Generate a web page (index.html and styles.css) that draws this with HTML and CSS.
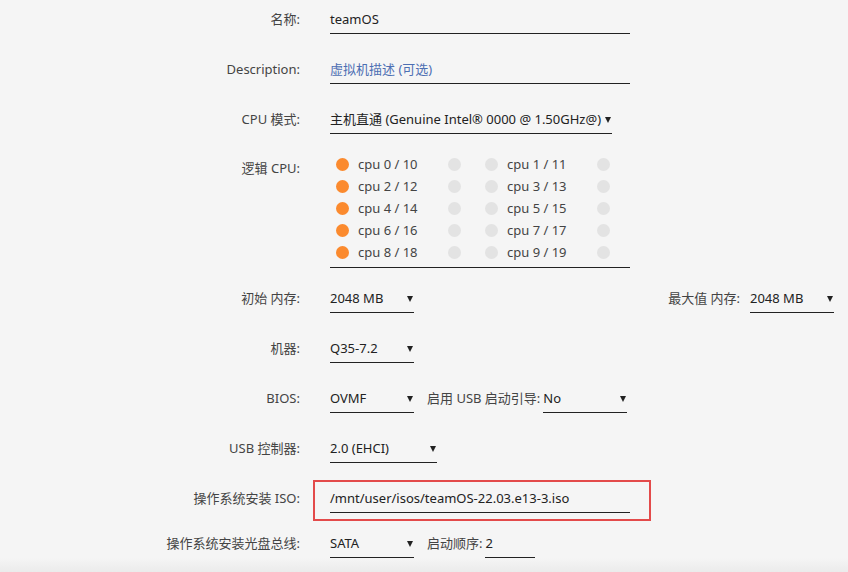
FILE: index.html
```html
<!DOCTYPE html>
<html lang="zh-CN">

<head>
    <meta charset="UTF-8">
    <meta name="viewport" content="width=device-width, initial-scale=1.0">
    <title>虚拟机设置</title>
    <link rel="stylesheet" href="styles.css">
</head>

<body>
<!-- 虚拟机表单 -->
<div class="vm-form">
    <div class="row">
        <div class="label">名称:</div>
        <div class="field w300">teamOS</div>
    </div>
    <div class="row">
        <div class="label">Description:</div>
        <div class="field w300 placeholder">虚拟机描述 (可选)</div>
    </div>
    <div class="row">
        <div class="label">CPU 模式:</div>
        <div class="field select w282">主机直通 (Genuine Intel® 0000 @ 1.50GHz@)<i class="caret"></i></div>
    </div>

    <!-- 逻辑 CPU -->
    <div class="row cpu-row">
        <div class="label cpu-label">逻辑 CPU:</div>
        <div class="cpu-grid">
            <div class="cpu on"><span class="dot"></span>cpu 0 / 10</div><div class="cpu"><span class="dot"></span></div>
            <div class="cpu"><span class="dot"></span>cpu 1 / 11</div><div class="cpu"><span class="dot"></span></div>
            <div class="cpu on"><span class="dot"></span>cpu 2 / 12</div><div class="cpu"><span class="dot"></span></div>
            <div class="cpu"><span class="dot"></span>cpu 3 / 13</div><div class="cpu"><span class="dot"></span></div>
            <div class="cpu on"><span class="dot"></span>cpu 4 / 14</div><div class="cpu"><span class="dot"></span></div>
            <div class="cpu"><span class="dot"></span>cpu 5 / 15</div><div class="cpu"><span class="dot"></span></div>
            <div class="cpu on"><span class="dot"></span>cpu 6 / 16</div><div class="cpu"><span class="dot"></span></div>
            <div class="cpu"><span class="dot"></span>cpu 7 / 17</div><div class="cpu"><span class="dot"></span></div>
            <div class="cpu on"><span class="dot"></span>cpu 8 / 18</div><div class="cpu"><span class="dot"></span></div>
            <div class="cpu"><span class="dot"></span>cpu 9 / 19</div><div class="cpu"><span class="dot"></span></div>
        </div>
    </div>

    <div class="row mem-row">
        <div class="label">初始 内存:</div>
        <div class="field select w84">2048 MB<i class="caret"></i></div>
        <div class="max-mem">
            <span class="inline-label">最大值 内存:</span>
            <div class="field select w84">2048 MB<i class="caret"></i></div>
        </div>
    </div>
    <div class="row">
        <div class="label">机器:</div>
        <div class="field select w84">Q35-7.2<i class="caret"></i></div>
    </div>
    <div class="row">
        <div class="label">BIOS:</div>
        <div class="field select w84">OVMF<i class="caret"></i></div>
        <span class="inline-label">启用 USB 启动引导:</span>
        <div class="field select w84">No<i class="caret"></i></div>
    </div>
    <div class="row">
        <div class="label">USB 控制器:</div>
        <div class="field select w107">2.0 (EHCI)<i class="caret"></i></div>
    </div>
    <div class="row iso-row">
        <div class="label">操作系统安装 ISO:</div>
        <div class="highlight">
            <div class="field w300">/mnt/user/isos/teamOS-22.03.e13-3.iso</div>
        </div>
    </div>
    <div class="row">
        <div class="label">操作系统安装光盘总线:</div>
        <div class="field select w84">SATA<i class="caret"></i></div>
        <span class="inline-label">启动顺序:</span>
        <div class="field w50">2</div>
    </div>
</div>
</body>

</html>
```

FILE: styles.css
```css
html {
    background: linear-gradient(to bottom, #f5f5f5 0, #f5f5f5 558px, #ebebeb 572px);
    min-height: 100%;
}

body {
    font-family: "Noto Sans", "Noto Sans CJK SC", sans-serif;
    font-size: 13px;
    color: #333;
    margin: 0;
    padding: 0;
}

/* 表单行 */
.row {
    display: flex;
    align-items: flex-start;
    height: 50px;
    padding-top: 9px;
    box-sizing: border-box;
    line-height: 20px;
}

.label {
    width: 300px;
    text-align: right;
    margin-right: 30px;
    color: #444;
    flex-shrink: 0;
}

/* 输入框 / 下拉框 */
.field {
    position: relative;
    color: #222;
    padding-bottom: 4px;
    border-bottom: 1px solid #222;
    white-space: nowrap;
    box-sizing: border-box;
}

.placeholder {
    color: #4d6fb3;
}

.w300 { width: 300px; }
.w282 { width: 282px; }
.w107 { width: 107px; }
.w84 { width: 84px; }
.w50 { width: 50px; }

.caret {
    position: absolute;
    right: 1px;
    top: 8px;
    width: 0;
    height: 0;
    border-left: 3px solid transparent;
    border-right: 3px solid transparent;
    border-top: 6px solid #222;
}

.inline-label {
    color: #444;
    margin: 0 3px 0 13px;
}

/* 逻辑 CPU */
.cpu-row {
    height: 129px;
    padding-top: 3px;
}

.cpu-label {
    padding-top: 5px;
}

.cpu-grid {
    display: grid;
    grid-template-columns: 112px 37px 112px 26px;
    width: 300px;
    padding-left: 6px;
    padding-bottom: 4px;
    border-bottom: 1px solid #222;
    box-sizing: border-box;
    line-height: 22px;
    color: #444;
}

.cpu {
    display: flex;
    align-items: center;
}

.dot {
    width: 13px;
    height: 13px;
    border-radius: 50%;
    background-color: #e3e3e3;
    margin-right: 9px;
    flex-shrink: 0;
}

.cpu.on .dot {
    background-color: #fb8a2e;
}

/* 最大内存 */
.max-mem {
    display: flex;
    margin-left: auto;
    margin-right: 14px;
}

.max-mem .inline-label {
    margin-right: 10px;
}

/* ISO 标注框 */
.iso-row {
    height: 45px;
}

.highlight {
    border: 2px solid #e34a4a;
    padding: 6px 19px 6px 15px;
    margin: -8px 0 0 -17px;
}
```
